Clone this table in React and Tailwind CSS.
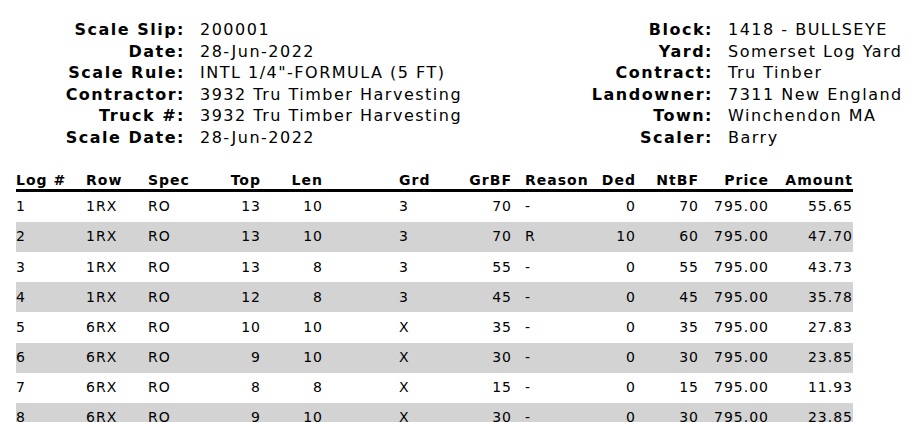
import React from 'react';

const leftInfo = [
  ['Scale Slip:', '200001'],
  ['Date:', '28-Jun-2022'],
  ['Scale Rule:', 'INTL 1/4"-FORMULA (5 FT)'],
  ['Contractor:', '3932 Tru Timber Harvesting'],
  ['Truck #:', '3932 Tru Timber Harvesting'],
  ['Scale Date:', '28-Jun-2022'],
];

const rightInfo = [
  ['Block:', '1418 - BULLSEYE'],
  ['Yard:', 'Somerset Log Yard'],
  ['Contract:', 'Tru Tinber'],
  ['Landowner:', '7311 New England'],
  ['Town:', 'Winchendon MA'],
  ['Scaler:', 'Barry'],
];

// label + alignment per column, widths live in the grid template below
const columns = [
  { label: 'Log #', cls: 'text-left' },
  { label: 'Row', cls: 'text-left' },
  { label: 'Spec', cls: 'text-left' },
  { label: 'Top', cls: 'text-right' },
  { label: 'Len', cls: 'text-right' },
  { label: 'Grd', cls: 'text-left pl-[76px]' },
  { label: 'GrBF', cls: 'text-right' },
  { label: 'Reason', cls: 'text-left pl-[13px]' },
  { label: 'Ded', cls: 'text-right' },
  { label: 'NtBF', cls: 'text-right' },
  { label: 'Price', cls: 'text-right' },
  { label: 'Amount', cls: 'text-right' },
];

const logs = [
  ['1', '1RX', 'RO', '13', '10', '3', '70', '-', '0', '70', '795.00', '55.65'],
  ['2', '1RX', 'RO', '13', '10', '3', '70', 'R', '10', '60', '795.00', '47.70'],
  ['3', '1RX', 'RO', '13', '8', '3', '55', '-', '0', '55', '795.00', '43.73'],
  ['4', '1RX', 'RO', '12', '8', '3', '45', '-', '0', '45', '795.00', '35.78'],
  ['5', '6RX', 'RO', '10', '10', 'X', '35', '-', '0', '35', '795.00', '27.83'],
  ['6', '6RX', 'RO', '9', '10', 'X', '30', '-', '0', '30', '795.00', '23.85'],
  ['7', '6RX', 'RO', '8', '8', 'X', '15', '-', '0', '15', '795.00', '11.93'],
  ['8', '6RX', 'RO', '9', '10', 'X', '30', '-', '0', '30', '795.00', '23.85'],
];

const gridCols =
  'grid grid-cols-[70px_62px_52px_61px_62px_132px_57px_78px_46px_63px_70px_84px]';

const InfoBlock = ({ rows, labelCol }) => (
  <div className={`grid ${labelCol} gap-x-[15px] leading-[21.6px]`}>
    {rows.map(([label, value]) => (
      <React.Fragment key={label}>
        <div className="text-right font-bold whitespace-nowrap">{label}</div>
        <div className="whitespace-nowrap">{value}</div>
      </React.Fragment>
    ))}
  </div>
);

export default function App() {
  return (
    <div className="min-h-screen bg-white text-black font-['DejaVu_Sans',Verdana,sans-serif]">
      {/* Slip details */}
      <div className="flex pt-[19px] text-[16px] tracking-[1.5px]">
        <div className="w-[470px]">
          <InfoBlock rows={leftInfo} labelCol="grid-cols-[185px_auto]" />
        </div>
        <div className="flex-1">
          <InfoBlock rows={rightInfo} labelCol="grid-cols-[243px_auto]" />
        </div>
      </div>

      {/* Log table */}
      <div className="ml-[16px] mt-[22px] w-[837px] text-[14px] tracking-[1px]">
        <div className={`${gridCols} border-b-[3px] border-black font-bold leading-[18px]`}>
          {columns.map((c) => (
            <div key={c.label} className={`${c.cls} whitespace-nowrap`}>
              {c.label}
            </div>
          ))}
        </div>
        {logs.map((row, i) => (
          <div
            key={row[0]}
            className={`${gridCols} h-[30.2px] items-center ${i % 2 === 1 ? 'bg-[#d3d3d3]' : 'bg-white'}`}
          >
            {row.map((cell, j) => (
              <div key={j} className={`${columns[j].cls} whitespace-nowrap`}>
                {cell}
              </div>
            ))}
          </div>
        ))}
      </div>
    </div>
  );
}
